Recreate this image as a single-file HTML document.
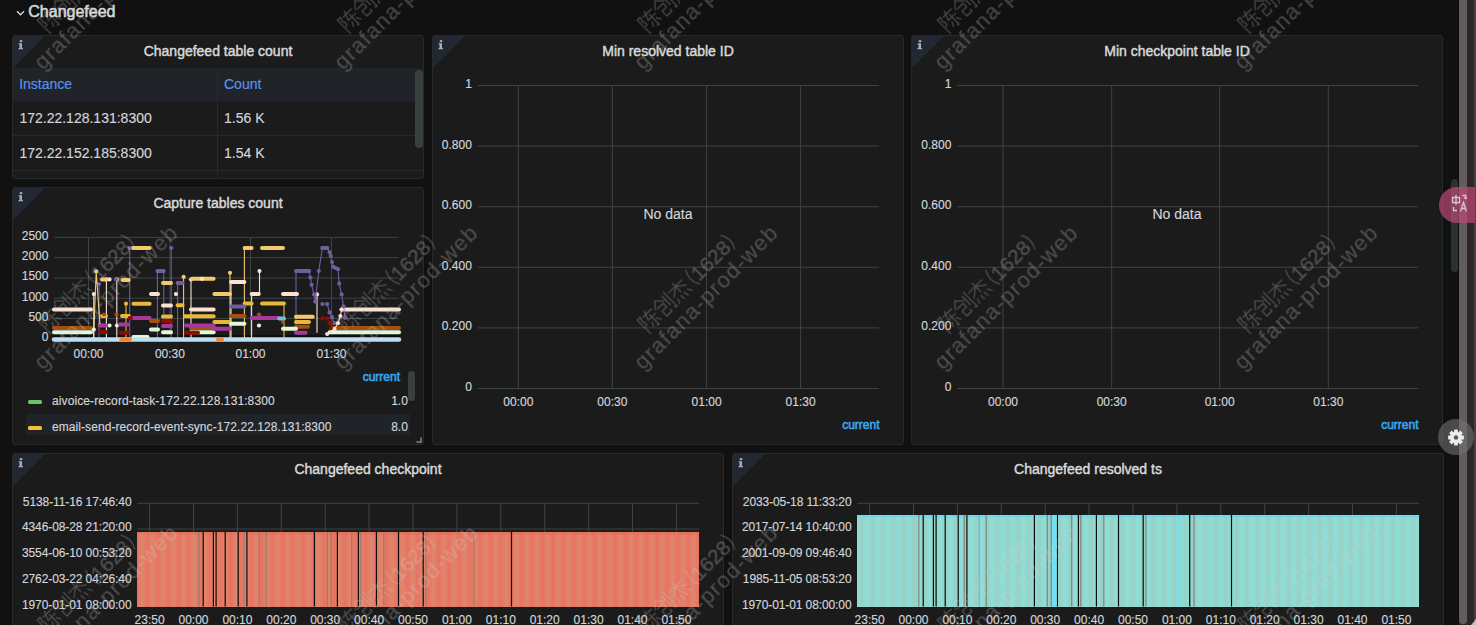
<!DOCTYPE html><html><head><meta charset="utf-8"><style>
*{box-sizing:border-box;margin:0;padding:0}
html,body{width:1476px;height:625px;overflow:hidden;background:#111111;font-family:"Liberation Sans",sans-serif;position:relative}
.p{position:absolute;background:#1b1b1b;border:1px solid #252b2a;border-radius:3px;overflow:hidden}
.corner{position:absolute;left:0;top:0;width:0;height:0;border-left:32px solid #222831;border-bottom:32px solid transparent}
.a{position:absolute;white-space:nowrap}
.m{-webkit-text-stroke:0.45px currentColor}
.n{-webkit-text-stroke:0.15px currentColor}
.b{-webkit-text-stroke:0.55px currentColor}
</style></head><body><svg class="a" style="left:15.5px;top:10px" width="9" height="6" viewBox="0 0 9 6"><path d="M1 1.2L4.5 4.7L8 1.2" stroke="#d8d9da" stroke-width="1.4" fill="none"/></svg><div class="a b" style="top:4.26px;font-size:16px;line-height:16px;color:#d8d9da;left:28.30px;">Changefeed</div><div class="p" style="left:12px;top:35px;width:412px;height:144px"><div class="corner"></div></div><svg class="a" style="left:18px;top:40px" width="6" height="10" viewBox="0 0 6 10"><ellipse cx="3" cy="1.15" rx="1.5" ry="1.05" fill="#a9acb2"/><path d="M0.7 3.2H4V8.1H5V9.2H0.5V8.1H1.5V4.4H0.7z" fill="#a9acb2"/></svg><div class="a m" style="top:43.75px;font-size:14px;line-height:14px;color:#d8d9da;left:-82.00px;width:600px;text-align:center;">Changefeed table count</div><div class="p" style="left:12px;top:187px;width:412px;height:258px"><div class="corner"></div></div><svg class="a" style="left:18px;top:192px" width="6" height="10" viewBox="0 0 6 10"><ellipse cx="3" cy="1.15" rx="1.5" ry="1.05" fill="#a9acb2"/><path d="M0.7 3.2H4V8.1H5V9.2H0.5V8.1H1.5V4.4H0.7z" fill="#a9acb2"/></svg><div class="a m" style="top:195.75px;font-size:14px;line-height:14px;color:#d8d9da;left:-82.00px;width:600px;text-align:center;">Capture tables count</div><div class="p" style="left:432px;top:35px;width:472px;height:410px"><div class="corner"></div></div><svg class="a" style="left:438px;top:40px" width="6" height="10" viewBox="0 0 6 10"><ellipse cx="3" cy="1.15" rx="1.5" ry="1.05" fill="#a9acb2"/><path d="M0.7 3.2H4V8.1H5V9.2H0.5V8.1H1.5V4.4H0.7z" fill="#a9acb2"/></svg><div class="a m" style="top:43.75px;font-size:14px;line-height:14px;color:#d8d9da;left:368.00px;width:600px;text-align:center;">Min resolved table ID</div><div class="p" style="left:911px;top:35px;width:532px;height:410px"><div class="corner"></div></div><svg class="a" style="left:917px;top:40px" width="6" height="10" viewBox="0 0 6 10"><ellipse cx="3" cy="1.15" rx="1.5" ry="1.05" fill="#a9acb2"/><path d="M0.7 3.2H4V8.1H5V9.2H0.5V8.1H1.5V4.4H0.7z" fill="#a9acb2"/></svg><div class="a m" style="top:43.75px;font-size:14px;line-height:14px;color:#d8d9da;left:877.00px;width:600px;text-align:center;">Min checkpoint table ID</div><div class="p" style="left:12px;top:453px;width:712px;height:300px"><div class="corner"></div></div><svg class="a" style="left:18px;top:458px" width="6" height="10" viewBox="0 0 6 10"><ellipse cx="3" cy="1.15" rx="1.5" ry="1.05" fill="#a9acb2"/><path d="M0.7 3.2H4V8.1H5V9.2H0.5V8.1H1.5V4.4H0.7z" fill="#a9acb2"/></svg><div class="a m" style="top:461.75px;font-size:14px;line-height:14px;color:#d8d9da;left:68.00px;width:600px;text-align:center;">Changefeed checkpoint</div><div class="p" style="left:732px;top:453px;width:712px;height:300px"><div class="corner"></div></div><svg class="a" style="left:738px;top:458px" width="6" height="10" viewBox="0 0 6 10"><ellipse cx="3" cy="1.15" rx="1.5" ry="1.05" fill="#a9acb2"/><path d="M0.7 3.2H4V8.1H5V9.2H0.5V8.1H1.5V4.4H0.7z" fill="#a9acb2"/></svg><div class="a m" style="top:461.75px;font-size:14px;line-height:14px;color:#d8d9da;left:788.00px;width:600px;text-align:center;">Changefeed resolved ts</div><div class="a" style="left:13px;top:68px;width:410px;height:33px;background:#202328;"></div><div class="a" style="left:217px;top:68px;width:1px;height:110px;background:#262a2b;"></div><div class="a" style="left:13px;top:135px;width:410px;height:1px;background:#262a2b;"></div><div class="a" style="left:13px;top:170px;width:410px;height:1px;background:#262a2b;"></div><div class="a n" style="top:77.35px;font-size:14px;line-height:14px;color:#5a93f0;left:19.20px;">Instance</div><div class="a n" style="top:77.35px;font-size:14px;line-height:14px;color:#5a93f0;left:224.00px;">Count</div><div class="a n" style="top:111.15px;font-size:14px;line-height:14px;color:#d2d5da;left:19.40px;">172.22.128.131:8300</div><div class="a n" style="top:111.15px;font-size:14px;line-height:14px;color:#d2d5da;left:224.00px;">1.56 K</div><div class="a n" style="top:146.15px;font-size:14px;line-height:14px;color:#d2d5da;left:19.40px;">172.22.152.185:8300</div><div class="a n" style="top:146.15px;font-size:14px;line-height:14px;color:#d2d5da;left:224.00px;">1.54 K</div><div class="a" style="left:415px;top:70px;width:8px;height:78px;background:#3a4040;border-radius:4px"></div><svg class="a" style="left:0;top:0" width="1476" height="625"><line x1="54" x2="398.7" y1="237.4" y2="237.4" stroke="#3c4544"/><line x1="54" x2="398.7" y1="257.7" y2="257.7" stroke="#3c4544"/><line x1="54" x2="398.7" y1="278.0" y2="278.0" stroke="#3c4544"/><line x1="54" x2="398.7" y1="298.2" y2="298.2" stroke="#3c4544"/><line x1="54" x2="398.7" y1="318.5" y2="318.5" stroke="#3c4544"/><line x1="54" x2="398.7" y1="338.8" y2="338.8" stroke="#3c4544"/><line x1="88.5" x2="88.5" y1="237.4" y2="338.8" stroke="#3c4544"/><line x1="169.9" x2="169.9" y1="237.4" y2="338.8" stroke="#3c4544"/><line x1="250.5" x2="250.5" y1="237.4" y2="338.8" stroke="#3c4544"/><line x1="331.5" x2="331.5" y1="237.4" y2="338.8" stroke="#3c4544"/></svg><div class="a n" style="top:229.84px;font-size:12px;line-height:12px;color:#d2d5da;right:1427.60px;text-align:right;">2500</div><div class="a n" style="top:250.12px;font-size:12px;line-height:12px;color:#d2d5da;right:1427.60px;text-align:right;">2000</div><div class="a n" style="top:270.40px;font-size:12px;line-height:12px;color:#d2d5da;right:1427.60px;text-align:right;">1500</div><div class="a n" style="top:290.68px;font-size:12px;line-height:12px;color:#d2d5da;right:1427.60px;text-align:right;">1000</div><div class="a n" style="top:310.96px;font-size:12px;line-height:12px;color:#d2d5da;right:1427.60px;text-align:right;">500</div><div class="a n" style="top:331.24px;font-size:12px;line-height:12px;color:#d2d5da;right:1427.60px;text-align:right;">0</div><div class="a n" style="top:347.84px;font-size:12px;line-height:12px;color:#d2d5da;left:-211.50px;width:600px;text-align:center;">00:00</div><div class="a n" style="top:347.84px;font-size:12px;line-height:12px;color:#d2d5da;left:-130.10px;width:600px;text-align:center;">00:30</div><div class="a n" style="top:347.84px;font-size:12px;line-height:12px;color:#d2d5da;left:-49.50px;width:600px;text-align:center;">01:00</div><div class="a n" style="top:347.84px;font-size:12px;line-height:12px;color:#d2d5da;left:31.50px;width:600px;text-align:center;">01:30</div><svg class="a" style="left:0;top:0" width="1476" height="625"><defs><clipPath id="cp2"><rect x="50" y="228" width="352" height="116"/></clipPath></defs><g clip-path="url(#cp2)"><line x1="54" x2="399" y1="336.3" y2="336.3" stroke="#0d0d0d" stroke-width="2" stroke-linecap="round"/><line x1="54" x2="91" y1="332.3" y2="332.3" stroke="#e0f9d7" stroke-width="4" stroke-linecap="round"/><line x1="329.6" x2="399" y1="332.3" y2="332.3" stroke="#e0f9d7" stroke-width="4" stroke-linecap="round"/><line x1="54" x2="91" y1="328" y2="328" stroke="#a84e0e" stroke-width="4" stroke-linecap="round"/><line x1="332" x2="399" y1="328" y2="328" stroke="#a84e0e" stroke-width="4" stroke-linecap="round"/><line x1="54" x2="91" y1="309.5" y2="309.5" stroke="#f9e2d2" stroke-width="4" stroke-linecap="round"/><line x1="341.6" x2="399" y1="309.5" y2="309.5" stroke="#f9e2d2" stroke-width="4" stroke-linecap="round"/><line x1="191" x2="213.6" y1="309.5" y2="309.5" stroke="#f9e2d2" stroke-width="4" stroke-linecap="round"/><line x1="129.7" x2="129.7" y1="339" y2="248" stroke="#705da0" stroke-width="1.1"/><circle cx="129.7" cy="248" r="2.1" fill="#705da0"/><line x1="171.2" x2="171.2" y1="339" y2="248" stroke="#705da0" stroke-width="1.1"/><circle cx="171.2" cy="248" r="2.1" fill="#705da0"/><line x1="99" x2="99" y1="339" y2="284" stroke="#705da0" stroke-width="1.1"/><circle cx="99" cy="284" r="2.1" fill="#705da0"/><line x1="157.4" x2="157.4" y1="339" y2="270.9" stroke="#705da0" stroke-width="1.1"/><line x1="163.8" x2="163.8" y1="270.9" y2="316" stroke="#705da0" stroke-width="1.1"/><polyline points="93.5,339 96.2,271.4 100,325" fill="none" stroke="#f2c96d" stroke-width="1.1"/><circle cx="93.5" cy="339" r="2.1" fill="#f2c96d"/><circle cx="96.2" cy="271.4" r="2.1" fill="#f2c96d"/><circle cx="100" cy="325" r="2.1" fill="#f2c96d"/><line x1="93.8" x2="93.8" y1="339" y2="294.1" stroke="#f9e2d2" stroke-width="1.1"/><circle cx="93.8" cy="294.1" r="2.1" fill="#f9e2d2"/><line x1="106.4" x2="106.4" y1="339" y2="279.4" stroke="#f9e2d2" stroke-width="1.1"/><circle cx="106.4" cy="279.4" r="2.1" fill="#f9e2d2"/><line x1="116.8" x2="116.8" y1="339" y2="279.4" stroke="#f9e2d2" stroke-width="1.1"/><circle cx="116.8" cy="279.4" r="2.1" fill="#f9e2d2"/><line x1="126" x2="126" y1="339" y2="303.7" stroke="#eab839" stroke-width="1.1"/><circle cx="126" cy="303.7" r="2.1" fill="#eab839"/><line x1="230" x2="230" y1="339" y2="272.8" stroke="#f2c96d" stroke-width="1.1"/><circle cx="230" cy="272.8" r="2.1" fill="#f2c96d"/><line x1="183.6" x2="183.6" y1="339" y2="276.9" stroke="#f2c96d" stroke-width="1.1"/><circle cx="183.6" cy="276.9" r="2.1" fill="#f2c96d"/><line x1="191" x2="191" y1="339" y2="279.5" stroke="#f9e2d2" stroke-width="1.1"/><circle cx="191" cy="279.5" r="2.1" fill="#f9e2d2"/><line x1="231" x2="231" y1="339" y2="281.9" stroke="#f9e2d2" stroke-width="1.1"/><line x1="244.4" x2="244.4" y1="339" y2="248" stroke="#f2c96d" stroke-width="1.1"/><line x1="251.6" x2="251.6" y1="339" y2="294" stroke="#f9e2d2" stroke-width="1.1"/><line x1="259.5" x2="259.5" y1="294" y2="271.1" stroke="#f9e2d2" stroke-width="1.1"/><circle cx="259.5" cy="271.1" r="2.1" fill="#f9e2d2"/><line x1="284" x2="284" y1="303.5" y2="339" stroke="#eab839" stroke-width="1.1"/><line x1="296" x2="296" y1="328.7" y2="271.1" stroke="#705da0" stroke-width="1.1"/><line x1="317" x2="317" y1="332.8" y2="294.4" stroke="#f9e2d2" stroke-width="1.1"/><circle cx="317" cy="294.4" r="2.1" fill="#f9e2d2"/><line x1="177.6" x2="177.6" y1="339" y2="282.9" stroke="#705da0" stroke-width="1.1"/><line x1="133" x2="149.6" y1="248" y2="248" stroke="#f2c96d" stroke-width="4" stroke-linecap="round"/><line x1="244.6" x2="251.6" y1="248" y2="248" stroke="#f2c96d" stroke-width="4" stroke-linecap="round"/><line x1="262" x2="283" y1="248" y2="248" stroke="#f2c96d" stroke-width="4" stroke-linecap="round"/><line x1="102" x2="106" y1="279.4" y2="279.4" stroke="#f2c96d" stroke-width="4" stroke-linecap="round"/><line x1="122.4" x2="128.8" y1="280" y2="280" stroke="#f2c96d" stroke-width="4" stroke-linecap="round"/><line x1="163" x2="171" y1="283" y2="283" stroke="#f2c96d" stroke-width="4" stroke-linecap="round"/><line x1="192" x2="213.6" y1="278.8" y2="278.8" stroke="#f2c96d" stroke-width="4" stroke-linecap="round"/><line x1="214.4" x2="230" y1="294" y2="294" stroke="#f2c96d" stroke-width="4" stroke-linecap="round"/><line x1="296" x2="312.8" y1="316.7" y2="316.7" stroke="#f2c96d" stroke-width="4" stroke-linecap="round"/><circle cx="109.5" cy="279.4" r="2.1" fill="#f9e2d2"/><circle cx="116" cy="279.4" r="2.1" fill="#705da0"/><circle cx="202" cy="278.8" r="2.1" fill="#f9e2d2"/><circle cx="175.9" cy="294.1" r="2.1" fill="#f9e2d2"/><line x1="133.4" x2="149.6" y1="303.7" y2="303.7" stroke="#eab839" stroke-width="4" stroke-linecap="round"/><line x1="244.6" x2="251.6" y1="303.5" y2="303.5" stroke="#eab839" stroke-width="4" stroke-linecap="round"/><line x1="262" x2="284" y1="303.5" y2="303.5" stroke="#eab839" stroke-width="4" stroke-linecap="round"/><line x1="163" x2="171" y1="316.6" y2="316.6" stroke="#eab839" stroke-width="4" stroke-linecap="round"/><line x1="102" x2="106" y1="316" y2="316" stroke="#eab839" stroke-width="4" stroke-linecap="round"/><line x1="122" x2="128.8" y1="316" y2="316" stroke="#eab839" stroke-width="4" stroke-linecap="round"/><line x1="184.8" x2="213.6" y1="316.3" y2="316.3" stroke="#eab839" stroke-width="4" stroke-linecap="round"/><line x1="214.4" x2="230" y1="322" y2="322" stroke="#eab839" stroke-width="4" stroke-linecap="round"/><line x1="296" x2="309" y1="322" y2="322" stroke="#eab839" stroke-width="4" stroke-linecap="round"/><line x1="177.6" x2="182.4" y1="305.2" y2="305.2" stroke="#eab839" stroke-width="4" stroke-linecap="round"/><line x1="157.4" x2="163.8" y1="270.9" y2="270.9" stroke="#705da0" stroke-width="4" stroke-linecap="round"/><line x1="177.6" x2="182.4" y1="282.9" y2="282.9" stroke="#705da0" stroke-width="4" stroke-linecap="round"/><line x1="231" x2="244.4" y1="306.4" y2="306.4" stroke="#705da0" stroke-width="4" stroke-linecap="round"/><line x1="296" x2="309" y1="271.1" y2="271.1" stroke="#705da0" stroke-width="4" stroke-linecap="round"/><polyline points="309,271.1 310.4,277.6 311.6,284.8 314,294.4 315.2,301.6 318.8,271.1 322.4,248 327.2,248 329.6,252.4 330.8,256 332,262 333.2,266.8 335.6,268 338,269.2 339.2,283.6 341.6,294.4 343.5,306.4 345,318" fill="none" stroke="#705da0" stroke-width="1.1"/><circle cx="309" cy="271.1" r="2.1" fill="#705da0"/><circle cx="310.4" cy="277.6" r="2.1" fill="#705da0"/><circle cx="311.6" cy="284.8" r="2.1" fill="#705da0"/><circle cx="314" cy="294.4" r="2.1" fill="#705da0"/><circle cx="315.2" cy="301.6" r="2.1" fill="#705da0"/><circle cx="318.8" cy="271.1" r="2.1" fill="#705da0"/><circle cx="322.4" cy="248" r="2.1" fill="#705da0"/><circle cx="327.2" cy="248" r="2.1" fill="#705da0"/><circle cx="329.6" cy="252.4" r="2.1" fill="#705da0"/><circle cx="330.8" cy="256" r="2.1" fill="#705da0"/><circle cx="332" cy="262" r="2.1" fill="#705da0"/><circle cx="333.2" cy="266.8" r="2.1" fill="#705da0"/><circle cx="335.6" cy="268" r="2.1" fill="#705da0"/><circle cx="338" cy="269.2" r="2.1" fill="#705da0"/><circle cx="339.2" cy="283.6" r="2.1" fill="#705da0"/><circle cx="341.6" cy="294.4" r="2.1" fill="#705da0"/><circle cx="343.5" cy="306.4" r="2.1" fill="#705da0"/><circle cx="345" cy="318" r="2.1" fill="#705da0"/><line x1="322.4" x2="327.2" y1="248" y2="248" stroke="#705da0" stroke-width="4" stroke-linecap="round"/><polyline points="322.4,304 327.2,304 329.6,312.4 332,317.2 334.4,323.2" fill="none" stroke="#705da0" stroke-width="1.1"/><circle cx="322.4" cy="304" r="2.1" fill="#705da0"/><circle cx="327.2" cy="304" r="2.1" fill="#705da0"/><circle cx="329.6" cy="312.4" r="2.1" fill="#705da0"/><circle cx="332" cy="317.2" r="2.1" fill="#705da0"/><circle cx="334.4" cy="323.2" r="2.1" fill="#705da0"/><line x1="151" x2="158" y1="294" y2="294" stroke="#f9e2d2" stroke-width="4" stroke-linecap="round"/><line x1="163" x2="171" y1="305.5" y2="305.5" stroke="#f9e2d2" stroke-width="4" stroke-linecap="round"/><line x1="231" x2="244.4" y1="281.9" y2="281.9" stroke="#f9e2d2" stroke-width="4" stroke-linecap="round"/><line x1="251.6" x2="258.8" y1="294" y2="294" stroke="#f9e2d2" stroke-width="4" stroke-linecap="round"/><line x1="283" x2="297" y1="294" y2="294" stroke="#f9e2d2" stroke-width="4" stroke-linecap="round"/><polyline points="327.2,334 334.4,329.2 338,323.2 340.4,316 341.6,309.5" fill="none" stroke="#f9e2d2" stroke-width="1.1"/><circle cx="327.2" cy="334" r="2.1" fill="#f9e2d2"/><circle cx="334.4" cy="329.2" r="2.1" fill="#f9e2d2"/><circle cx="338" cy="323.2" r="2.1" fill="#f9e2d2"/><circle cx="340.4" cy="316" r="2.1" fill="#f9e2d2"/><circle cx="341.6" cy="309.5" r="2.1" fill="#f9e2d2"/><line x1="151" x2="158" y1="321" y2="321" stroke="#a84e0e" stroke-width="4" stroke-linecap="round"/><line x1="191" x2="213.6" y1="328" y2="328" stroke="#a84e0e" stroke-width="4" stroke-linecap="round"/><line x1="231" x2="244.4" y1="316" y2="316" stroke="#a84e0e" stroke-width="4" stroke-linecap="round"/><line x1="296" x2="308" y1="326.8" y2="326.8" stroke="#a84e0e" stroke-width="4" stroke-linecap="round"/><circle cx="104" cy="314.5" r="2.1" fill="#a84e0e"/><circle cx="116.5" cy="314.5" r="2.1" fill="#a84e0e"/><circle cx="259" cy="314.5" r="2.1" fill="#a84e0e"/><circle cx="283" cy="322" r="2.1" fill="#a84e0e"/><line x1="151" x2="158" y1="329.4" y2="329.4" stroke="#e0f9d7" stroke-width="4" stroke-linecap="round"/><line x1="283" x2="296" y1="328.7" y2="328.7" stroke="#e0f9d7" stroke-width="4" stroke-linecap="round"/><line x1="231" x2="244.4" y1="323.7" y2="323.7" stroke="#e0f9d7" stroke-width="4" stroke-linecap="round"/><line x1="191" x2="213.6" y1="332.3" y2="332.3" stroke="#e0f9d7" stroke-width="4" stroke-linecap="round"/><line x1="163" x2="171" y1="332.3" y2="332.3" stroke="#e0f9d7" stroke-width="4" stroke-linecap="round"/><circle cx="93.8" cy="329.5" r="2.1" fill="#e0f9d7"/><circle cx="109.5" cy="325.5" r="2.1" fill="#e0f9d7"/><circle cx="117" cy="325.5" r="2.1" fill="#e0f9d7"/><circle cx="259" cy="325.5" r="2.1" fill="#e0f9d7"/><line x1="133" x2="148" y1="336.4" y2="336.4" stroke="#e0f9d7" stroke-width="3" stroke-linecap="round"/><line x1="133" x2="149.6" y1="318" y2="318" stroke="#a8399c" stroke-width="4" stroke-linecap="round"/><line x1="251.6" x2="279.2" y1="318" y2="318" stroke="#a8399c" stroke-width="4" stroke-linecap="round"/><line x1="279.2" x2="284" y1="318.4" y2="318.4" stroke="#65c5db" stroke-width="4" stroke-linecap="round"/><line x1="100" x2="106" y1="325.6" y2="325.6" stroke="#a8399c" stroke-width="4" stroke-linecap="round"/><line x1="120" x2="128" y1="324.5" y2="324.5" stroke="#a8399c" stroke-width="4" stroke-linecap="round"/><line x1="186" x2="213.6" y1="325.6" y2="325.6" stroke="#a8399c" stroke-width="4" stroke-linecap="round"/><line x1="214" x2="230" y1="328.7" y2="328.7" stroke="#a8399c" stroke-width="4" stroke-linecap="round"/><line x1="296" x2="305.6" y1="332.8" y2="332.8" stroke="#a8399c" stroke-width="4" stroke-linecap="round"/><line x1="163" x2="171" y1="326" y2="326" stroke="#a8399c" stroke-width="4" stroke-linecap="round"/><line x1="100" x2="106" y1="332" y2="332" stroke="#890f02" stroke-width="4" stroke-linecap="round"/><line x1="121" x2="128" y1="332.8" y2="332.8" stroke="#890f02" stroke-width="4" stroke-linecap="round"/><line x1="186" x2="198" y1="332.8" y2="332.8" stroke="#890f02" stroke-width="4" stroke-linecap="round"/><line x1="163" x2="171" y1="321" y2="321" stroke="#890f02" stroke-width="4" stroke-linecap="round"/><line x1="129.7" x2="131" y1="318" y2="318" stroke="#890f02" stroke-width="4" stroke-linecap="round"/><polyline points="322.4,318.4 327.2,318.4 329.6,323.2 330.8,328" fill="none" stroke="#890f02" stroke-width="1.1"/><circle cx="322.4" cy="318.4" r="2.1" fill="#890f02"/><circle cx="327.2" cy="318.4" r="2.1" fill="#890f02"/><circle cx="329.6" cy="323.2" r="2.1" fill="#890f02"/><circle cx="330.8" cy="328" r="2.1" fill="#890f02"/><line x1="54" x2="399" y1="339.5" y2="339.5" stroke="#badff4" stroke-width="4.5" stroke-linecap="round"/><line x1="121.4" x2="129.7" y1="339.5" y2="339.5" stroke="#ef843c" stroke-width="4" stroke-linecap="round"/><line x1="218" x2="222" y1="339.5" y2="339.5" stroke="#ef843c" stroke-width="4" stroke-linecap="round"/></g></svg><div class="a b" style="top:370.84px;font-size:12px;line-height:12px;color:#36a8f0;right:1076.00px;text-align:right;">current</div><div class="a" style="left:28px;top:400px;width:14px;height:4px;background:#73bf69;border-radius:1.5px"></div><div class="a n" style="top:394.54px;font-size:12px;line-height:12px;color:#d2d5da;letter-spacing:0.1px;left:52.00px;">aivoice-record-task-172.22.128.131:8300</div><div class="a n" style="top:394.54px;font-size:12px;line-height:12px;color:#d2d5da;right:1068.20px;text-align:right;">1.0</div><div class="a" style="left:26px;top:414px;width:384px;height:21px;background:#202328;"></div><div class="a" style="left:28px;top:426px;width:14px;height:4px;background:#f2c13a;border-radius:1.5px"></div><div class="a n" style="top:420.84px;font-size:12px;line-height:12px;color:#d2d5da;letter-spacing:0.07px;left:52.00px;">email-send-record-event-sync-172.22.128.131:8300</div><div class="a n" style="top:420.84px;font-size:12px;line-height:12px;color:#d2d5da;right:1068.20px;text-align:right;">8.0</div><div class="a" style="left:408px;top:371px;width:7px;height:30px;background:#3a4040;border-radius:4px"></div><svg class="a" style="left:415px;top:436px" width="8" height="8"><path d="M5 1.5H7V7H1.5V5H5z" fill="#6a6d6e"/></svg><svg class="a" style="left:0;top:0" width="1476" height="625"><line x1="477.8" x2="879" y1="85.5" y2="85.5" stroke="#3c4544"/><line x1="477.8" x2="879" y1="146.1" y2="146.1" stroke="#3c4544"/><line x1="477.8" x2="879" y1="206.7" y2="206.7" stroke="#3c4544"/><line x1="477.8" x2="879" y1="267.3" y2="267.3" stroke="#3c4544"/><line x1="477.8" x2="879" y1="327.9" y2="327.9" stroke="#3c4544"/><line x1="477.8" x2="879" y1="388.5" y2="388.5" stroke="#3c4544"/><line x1="518.3" x2="518.3" y1="85.5" y2="388.5" stroke="#3c4544"/><line x1="612.3" x2="612.3" y1="85.5" y2="388.5" stroke="#3c4544"/><line x1="706.6" x2="706.6" y1="85.5" y2="388.5" stroke="#3c4544"/><line x1="800.6" x2="800.6" y1="85.5" y2="388.5" stroke="#3c4544"/></svg><div class="a n" style="top:77.94px;font-size:12px;line-height:12px;color:#d2d5da;right:1004.20px;text-align:right;">1</div><div class="a n" style="top:138.54px;font-size:12px;line-height:12px;color:#d2d5da;right:1004.20px;text-align:right;">0.800</div><div class="a n" style="top:199.14px;font-size:12px;line-height:12px;color:#d2d5da;right:1004.20px;text-align:right;">0.600</div><div class="a n" style="top:259.74px;font-size:12px;line-height:12px;color:#d2d5da;right:1004.20px;text-align:right;">0.400</div><div class="a n" style="top:320.34px;font-size:12px;line-height:12px;color:#d2d5da;right:1004.20px;text-align:right;">0.200</div><div class="a n" style="top:380.94px;font-size:12px;line-height:12px;color:#d2d5da;right:1004.20px;text-align:right;">0</div><div class="a n" style="top:396.24px;font-size:12px;line-height:12px;color:#d2d5da;left:218.30px;width:600px;text-align:center;">00:00</div><div class="a n" style="top:396.24px;font-size:12px;line-height:12px;color:#d2d5da;left:312.30px;width:600px;text-align:center;">00:30</div><div class="a n" style="top:396.24px;font-size:12px;line-height:12px;color:#d2d5da;left:406.60px;width:600px;text-align:center;">01:00</div><div class="a n" style="top:396.24px;font-size:12px;line-height:12px;color:#d2d5da;left:500.60px;width:600px;text-align:center;">01:30</div><div class="a n" style="top:207.15px;font-size:14px;line-height:14px;color:#d2d5da;left:368.00px;width:600px;text-align:center;">No data</div><div class="a b" style="top:418.84px;font-size:12px;line-height:12px;color:#36a8f0;right:596.50px;text-align:right;">current</div><svg class="a" style="left:0;top:0" width="1476" height="625"><line x1="957.3" x2="1418" y1="85.5" y2="85.5" stroke="#3c4544"/><line x1="957.3" x2="1418" y1="146.1" y2="146.1" stroke="#3c4544"/><line x1="957.3" x2="1418" y1="206.7" y2="206.7" stroke="#3c4544"/><line x1="957.3" x2="1418" y1="267.3" y2="267.3" stroke="#3c4544"/><line x1="957.3" x2="1418" y1="327.9" y2="327.9" stroke="#3c4544"/><line x1="957.3" x2="1418" y1="388.5" y2="388.5" stroke="#3c4544"/><line x1="1003.0" x2="1003.0" y1="85.5" y2="388.5" stroke="#3c4544"/><line x1="1111.7" x2="1111.7" y1="85.5" y2="388.5" stroke="#3c4544"/><line x1="1219.7" x2="1219.7" y1="85.5" y2="388.5" stroke="#3c4544"/><line x1="1328.3" x2="1328.3" y1="85.5" y2="388.5" stroke="#3c4544"/></svg><div class="a n" style="top:77.94px;font-size:12px;line-height:12px;color:#d2d5da;right:524.70px;text-align:right;">1</div><div class="a n" style="top:138.54px;font-size:12px;line-height:12px;color:#d2d5da;right:524.70px;text-align:right;">0.800</div><div class="a n" style="top:199.14px;font-size:12px;line-height:12px;color:#d2d5da;right:524.70px;text-align:right;">0.600</div><div class="a n" style="top:259.74px;font-size:12px;line-height:12px;color:#d2d5da;right:524.70px;text-align:right;">0.400</div><div class="a n" style="top:320.34px;font-size:12px;line-height:12px;color:#d2d5da;right:524.70px;text-align:right;">0.200</div><div class="a n" style="top:380.94px;font-size:12px;line-height:12px;color:#d2d5da;right:524.70px;text-align:right;">0</div><div class="a n" style="top:396.24px;font-size:12px;line-height:12px;color:#d2d5da;left:703.00px;width:600px;text-align:center;">00:00</div><div class="a n" style="top:396.24px;font-size:12px;line-height:12px;color:#d2d5da;left:811.70px;width:600px;text-align:center;">00:30</div><div class="a n" style="top:396.24px;font-size:12px;line-height:12px;color:#d2d5da;left:919.70px;width:600px;text-align:center;">01:00</div><div class="a n" style="top:396.24px;font-size:12px;line-height:12px;color:#d2d5da;left:1028.30px;width:600px;text-align:center;">01:30</div><div class="a n" style="top:207.15px;font-size:14px;line-height:14px;color:#d2d5da;left:877.00px;width:600px;text-align:center;">No data</div><div class="a b" style="top:418.84px;font-size:12px;line-height:12px;color:#36a8f0;right:57.50px;text-align:right;">current</div><svg class="a" style="left:0;top:0" width="1476" height="625"><line x1="137.3" x2="699.2" y1="503.3" y2="503.3" stroke="#3c4544"/><line x1="137.3" x2="699.2" y1="529.0" y2="529.0" stroke="#3c4544"/><line x1="137.3" x2="699.2" y1="554.8" y2="554.8" stroke="#3c4544"/><line x1="137.3" x2="699.2" y1="580.5" y2="580.5" stroke="#3c4544"/><line x1="137.3" x2="699.2" y1="606.3" y2="606.3" stroke="#3c4544"/><line x1="149.6" x2="149.6" y1="503.3" y2="606.3" stroke="#3c4544"/><line x1="193.5" x2="193.5" y1="503.3" y2="606.3" stroke="#3c4544"/><line x1="237.4" x2="237.4" y1="503.3" y2="606.3" stroke="#3c4544"/><line x1="281.3" x2="281.3" y1="503.3" y2="606.3" stroke="#3c4544"/><line x1="325.2" x2="325.2" y1="503.3" y2="606.3" stroke="#3c4544"/><line x1="369.1" x2="369.1" y1="503.3" y2="606.3" stroke="#3c4544"/><line x1="413.0" x2="413.0" y1="503.3" y2="606.3" stroke="#3c4544"/><line x1="456.9" x2="456.9" y1="503.3" y2="606.3" stroke="#3c4544"/><line x1="500.8" x2="500.8" y1="503.3" y2="606.3" stroke="#3c4544"/><line x1="544.7" x2="544.7" y1="503.3" y2="606.3" stroke="#3c4544"/><line x1="588.6" x2="588.6" y1="503.3" y2="606.3" stroke="#3c4544"/><line x1="632.5" x2="632.5" y1="503.3" y2="606.3" stroke="#3c4544"/><line x1="676.4" x2="676.4" y1="503.3" y2="606.3" stroke="#3c4544"/></svg><div class="a" style="left:137.3px;top:532.0px;width:561.9px;height:74.5px;background:repeating-linear-gradient(90deg,#ea7160 0px,#dc886d 5.2px,#ea7160 10.4px)"></div><svg class="a" style="left:0;top:0" width="1476" height="625"><rect x="137.3" y="532.6" width="561.9" height="1.6" fill="#ee6a58"/><rect x="202.60" y="532" width="1.2" height="74.5" fill="#0b0b0b"/><rect x="212.80" y="532" width="1.2" height="74.5" fill="#0b0b0b"/><rect x="215.50" y="532" width="1.2" height="74.5" fill="#0b0b0b"/><rect x="224.60" y="532" width="1.2" height="74.5" fill="#0b0b0b"/><rect x="237.60" y="532" width="1.2" height="74.5" fill="#0b0b0b"/><rect x="246.30" y="532" width="1.2" height="74.5" fill="#0b0b0b"/><rect x="313.80" y="532" width="1.2" height="74.5" fill="#0b0b0b"/><rect x="336.80" y="532" width="1.2" height="74.5" fill="#0b0b0b"/><rect x="357.80" y="532" width="1.2" height="74.5" fill="#0b0b0b"/><rect x="375.80" y="532" width="1.2" height="74.5" fill="#0b0b0b"/><rect x="397.90" y="532" width="1.2" height="74.5" fill="#0b0b0b"/><rect x="422.60" y="532" width="1.2" height="74.5" fill="#0b0b0b"/><rect x="510.90" y="532" width="1.2" height="74.5" fill="#0b0b0b"/><rect x="198.20" y="532" width="1.2" height="74.5" fill="#9a7a6c"/><rect x="243.60" y="532" width="1.2" height="74.5" fill="#9a7a6c"/><rect x="265.60" y="532" width="1.2" height="74.5" fill="#9a7a6c"/><rect x="326.70" y="532" width="1.2" height="74.5" fill="#9a7a6c"/><rect x="330.60" y="532" width="1.2" height="74.5" fill="#9a7a6c"/><rect x="351.10" y="532" width="1.2" height="74.5" fill="#9a7a6c"/><rect x="360.20" y="532" width="1.2" height="74.5" fill="#9a7a6c"/><rect x="383.20" y="532" width="1.2" height="74.5" fill="#9a7a6c"/><rect x="425.30" y="532" width="1.2" height="74.5" fill="#9a7a6c"/><rect x="473.40" y="532" width="1.2" height="74.5" fill="#9a7a6c"/><rect x="258.70" y="532" width="1" height="74.5" fill="#a87088"/></svg><div class="a n" style="top:495.74px;font-size:12px;line-height:12px;color:#d2d5da;letter-spacing:-0.1px;right:1344.50px;text-align:right;">5138-11-16 17:46:40</div><div class="a n" style="top:521.49px;font-size:12px;line-height:12px;color:#d2d5da;letter-spacing:-0.1px;right:1344.50px;text-align:right;">4346-08-28 21:20:00</div><div class="a n" style="top:547.24px;font-size:12px;line-height:12px;color:#d2d5da;letter-spacing:-0.1px;right:1344.50px;text-align:right;">3554-06-10 00:53:20</div><div class="a n" style="top:572.99px;font-size:12px;line-height:12px;color:#d2d5da;letter-spacing:-0.1px;right:1344.50px;text-align:right;">2762-03-22 04:26:40</div><div class="a n" style="top:598.74px;font-size:12px;line-height:12px;color:#d2d5da;letter-spacing:-0.1px;right:1344.50px;text-align:right;">1970-01-01 08:00:00</div><div class="a n" style="top:614.34px;font-size:12px;line-height:12px;color:#d2d5da;left:-150.40px;width:600px;text-align:center;">23:50</div><div class="a n" style="top:614.34px;font-size:12px;line-height:12px;color:#d2d5da;left:-106.50px;width:600px;text-align:center;">00:00</div><div class="a n" style="top:614.34px;font-size:12px;line-height:12px;color:#d2d5da;left:-62.60px;width:600px;text-align:center;">00:10</div><div class="a n" style="top:614.34px;font-size:12px;line-height:12px;color:#d2d5da;left:-18.70px;width:600px;text-align:center;">00:20</div><div class="a n" style="top:614.34px;font-size:12px;line-height:12px;color:#d2d5da;left:25.20px;width:600px;text-align:center;">00:30</div><div class="a n" style="top:614.34px;font-size:12px;line-height:12px;color:#d2d5da;left:69.10px;width:600px;text-align:center;">00:40</div><div class="a n" style="top:614.34px;font-size:12px;line-height:12px;color:#d2d5da;left:113.00px;width:600px;text-align:center;">00:50</div><div class="a n" style="top:614.34px;font-size:12px;line-height:12px;color:#d2d5da;left:156.90px;width:600px;text-align:center;">01:00</div><div class="a n" style="top:614.34px;font-size:12px;line-height:12px;color:#d2d5da;left:200.80px;width:600px;text-align:center;">01:10</div><div class="a n" style="top:614.34px;font-size:12px;line-height:12px;color:#d2d5da;left:244.70px;width:600px;text-align:center;">01:20</div><div class="a n" style="top:614.34px;font-size:12px;line-height:12px;color:#d2d5da;left:288.60px;width:600px;text-align:center;">01:30</div><div class="a n" style="top:614.34px;font-size:12px;line-height:12px;color:#d2d5da;left:332.50px;width:600px;text-align:center;">01:40</div><div class="a n" style="top:614.34px;font-size:12px;line-height:12px;color:#d2d5da;left:376.40px;width:600px;text-align:center;">01:50</div><svg class="a" style="left:0;top:0" width="1476" height="625"><line x1="857.3" x2="1419.2" y1="503.3" y2="503.3" stroke="#3c4544"/><line x1="857.3" x2="1419.2" y1="529.0" y2="529.0" stroke="#3c4544"/><line x1="857.3" x2="1419.2" y1="554.8" y2="554.8" stroke="#3c4544"/><line x1="857.3" x2="1419.2" y1="580.5" y2="580.5" stroke="#3c4544"/><line x1="857.3" x2="1419.2" y1="606.3" y2="606.3" stroke="#3c4544"/><line x1="869.6" x2="869.6" y1="503.3" y2="606.3" stroke="#3c4544"/><line x1="913.5" x2="913.5" y1="503.3" y2="606.3" stroke="#3c4544"/><line x1="957.4" x2="957.4" y1="503.3" y2="606.3" stroke="#3c4544"/><line x1="1001.3" x2="1001.3" y1="503.3" y2="606.3" stroke="#3c4544"/><line x1="1045.2" x2="1045.2" y1="503.3" y2="606.3" stroke="#3c4544"/><line x1="1089.1" x2="1089.1" y1="503.3" y2="606.3" stroke="#3c4544"/><line x1="1133.0" x2="1133.0" y1="503.3" y2="606.3" stroke="#3c4544"/><line x1="1176.9" x2="1176.9" y1="503.3" y2="606.3" stroke="#3c4544"/><line x1="1220.8" x2="1220.8" y1="503.3" y2="606.3" stroke="#3c4544"/><line x1="1264.7" x2="1264.7" y1="503.3" y2="606.3" stroke="#3c4544"/><line x1="1308.6" x2="1308.6" y1="503.3" y2="606.3" stroke="#3c4544"/><line x1="1352.5" x2="1352.5" y1="503.3" y2="606.3" stroke="#3c4544"/><line x1="1396.4" x2="1396.4" y1="503.3" y2="606.3" stroke="#3c4544"/></svg><div class="a" style="left:857.3px;top:515.0px;width:561.9px;height:91.5px;background:repeating-linear-gradient(90deg,#8ddfd9 0px,#98d0c4 5.2px,#8ddfd9 10.4px)"></div><svg class="a" style="left:0;top:0" width="1476" height="625"><rect x="857.3" y="515.6" width="561.9" height="1.6" fill="#6ad8ec"/><rect x="922.60" y="515" width="1.2" height="91.5" fill="#0b0b0b"/><rect x="932.80" y="515" width="1.2" height="91.5" fill="#0b0b0b"/><rect x="935.50" y="515" width="1.2" height="91.5" fill="#0b0b0b"/><rect x="944.60" y="515" width="1.2" height="91.5" fill="#0b0b0b"/><rect x="957.60" y="515" width="1.2" height="91.5" fill="#0b0b0b"/><rect x="966.30" y="515" width="1.2" height="91.5" fill="#0b0b0b"/><rect x="1033.80" y="515" width="1.2" height="91.5" fill="#0b0b0b"/><rect x="1056.80" y="515" width="1.2" height="91.5" fill="#0b0b0b"/><rect x="1077.80" y="515" width="1.2" height="91.5" fill="#0b0b0b"/><rect x="1095.80" y="515" width="1.2" height="91.5" fill="#0b0b0b"/><rect x="1117.90" y="515" width="1.2" height="91.5" fill="#0b0b0b"/><rect x="1142.60" y="515" width="1.2" height="91.5" fill="#0b0b0b"/><rect x="1230.90" y="515" width="1.2" height="91.5" fill="#0b0b0b"/><rect x="918.20" y="515" width="1.2" height="91.5" fill="#85807a"/><rect x="963.60" y="515" width="1.2" height="91.5" fill="#85807a"/><rect x="985.60" y="515" width="1.2" height="91.5" fill="#85807a"/><rect x="1046.70" y="515" width="1.2" height="91.5" fill="#85807a"/><rect x="1050.60" y="515" width="1.2" height="91.5" fill="#85807a"/><rect x="1071.10" y="515" width="1.2" height="91.5" fill="#85807a"/><rect x="1080.20" y="515" width="1.2" height="91.5" fill="#85807a"/><rect x="1103.20" y="515" width="1.2" height="91.5" fill="#85807a"/><rect x="1145.30" y="515" width="1.2" height="91.5" fill="#85807a"/><rect x="1193.40" y="515" width="1.2" height="91.5" fill="#85807a"/><rect x="978.70" y="515" width="1" height="91.5" fill="#6aa8e0"/><rect x="1052" y="515" width="4.70" height="91.5" fill="#72e0f2"/><rect x="1178.3" y="515" width="2.20" height="91.5" fill="#72e0f2"/><rect x="1189.05" y="515" width="1.30" height="91.5" fill="#0b0b0b"/></svg><div class="a n" style="top:495.74px;font-size:12px;line-height:12px;color:#d2d5da;letter-spacing:-0.1px;right:624.50px;text-align:right;">2033-05-18 11:33:20</div><div class="a n" style="top:521.49px;font-size:12px;line-height:12px;color:#d2d5da;letter-spacing:-0.1px;right:624.50px;text-align:right;">2017-07-14 10:40:00</div><div class="a n" style="top:547.24px;font-size:12px;line-height:12px;color:#d2d5da;letter-spacing:-0.1px;right:624.50px;text-align:right;">2001-09-09 09:46:40</div><div class="a n" style="top:572.99px;font-size:12px;line-height:12px;color:#d2d5da;letter-spacing:-0.1px;right:624.50px;text-align:right;">1985-11-05 08:53:20</div><div class="a n" style="top:598.74px;font-size:12px;line-height:12px;color:#d2d5da;letter-spacing:-0.1px;right:624.50px;text-align:right;">1970-01-01 08:00:00</div><div class="a n" style="top:614.34px;font-size:12px;line-height:12px;color:#d2d5da;left:569.60px;width:600px;text-align:center;">23:50</div><div class="a n" style="top:614.34px;font-size:12px;line-height:12px;color:#d2d5da;left:613.50px;width:600px;text-align:center;">00:00</div><div class="a n" style="top:614.34px;font-size:12px;line-height:12px;color:#d2d5da;left:657.40px;width:600px;text-align:center;">00:10</div><div class="a n" style="top:614.34px;font-size:12px;line-height:12px;color:#d2d5da;left:701.30px;width:600px;text-align:center;">00:20</div><div class="a n" style="top:614.34px;font-size:12px;line-height:12px;color:#d2d5da;left:745.20px;width:600px;text-align:center;">00:30</div><div class="a n" style="top:614.34px;font-size:12px;line-height:12px;color:#d2d5da;left:789.10px;width:600px;text-align:center;">00:40</div><div class="a n" style="top:614.34px;font-size:12px;line-height:12px;color:#d2d5da;left:833.00px;width:600px;text-align:center;">00:50</div><div class="a n" style="top:614.34px;font-size:12px;line-height:12px;color:#d2d5da;left:876.90px;width:600px;text-align:center;">01:00</div><div class="a n" style="top:614.34px;font-size:12px;line-height:12px;color:#d2d5da;left:920.80px;width:600px;text-align:center;">01:10</div><div class="a n" style="top:614.34px;font-size:12px;line-height:12px;color:#d2d5da;left:964.70px;width:600px;text-align:center;">01:20</div><div class="a n" style="top:614.34px;font-size:12px;line-height:12px;color:#d2d5da;left:1008.60px;width:600px;text-align:center;">01:30</div><div class="a n" style="top:614.34px;font-size:12px;line-height:12px;color:#d2d5da;left:1052.50px;width:600px;text-align:center;">01:40</div><div class="a n" style="top:614.34px;font-size:12px;line-height:12px;color:#d2d5da;left:1096.40px;width:600px;text-align:center;">01:50</div><div class="a" style="left:1451px;top:179px;width:7px;height:93px;background:#2b3232;border-radius:4px"></div><div class="a" style="left:1474px;top:0px;width:2px;height:625px;background:#454242;"></div><div class="a" style="left:1459px;top:0px;width:15px;height:625px;background:#2d2727;border-radius:0 0 5px 0"></div><div class="a" style="left:1458px;top:0px;width:1px;height:625px;background:#0c0c0c;"></div><div class="a" style="left:1459px;top:-10px;width:8px;height:634px;background:#635c5c;border-radius:4px"></div><div class="a" style="left:1438.5px;top:187px;width:36.5px;height:36px;background:rgba(186,72,118,0.72);border-radius:18px 0 0 18px"></div><svg class="a" style="left:1448px;top:192px" width="24" height="24" viewBox="0 0 24 24" fill="none" stroke="#d9c6cf" stroke-width="1.3"><path d="M4.5 5.5h7v5h-7z M8 3v10"/><path d="M14.5 3.5h3.2v3"/><path d="M16.3 5.4l1.4 1.3 1.4-1.3"/><path d="M5.5 15v3.5h3.5"/><path d="M12.5 19.5L15.5 10.5L18.5 19.5 M13.5 16.5h4"/></svg><svg class="a" style="left:1438px;top:419px" width="36" height="36" viewBox="0 0 36 36"><circle cx="18" cy="18" r="18" fill="rgba(112,112,112,0.6)"/><g transform="translate(18,18.5)" fill="#ececec"><rect x="-1.9" y="-7.9" width="3.8" height="4" rx="0.7" transform="rotate(0)"/><rect x="-1.9" y="-7.9" width="3.8" height="4" rx="0.7" transform="rotate(45)"/><rect x="-1.9" y="-7.9" width="3.8" height="4" rx="0.7" transform="rotate(90)"/><rect x="-1.9" y="-7.9" width="3.8" height="4" rx="0.7" transform="rotate(135)"/><rect x="-1.9" y="-7.9" width="3.8" height="4" rx="0.7" transform="rotate(180)"/><rect x="-1.9" y="-7.9" width="3.8" height="4" rx="0.7" transform="rotate(225)"/><rect x="-1.9" y="-7.9" width="3.8" height="4" rx="0.7" transform="rotate(270)"/><rect x="-1.9" y="-7.9" width="3.8" height="4" rx="0.7" transform="rotate(315)"/><circle r="5.9"/></g><circle cx="18" cy="18.5" r="2.2" fill="#5a5a5a"/></svg><svg class="a" style="left:1471px;top:619px" width="5" height="6"><path d="M5 0V6H0z" fill="#b8b8d8"/></svg><svg class="a" style="left:0;top:0;font-family:'Liberation Sans'" width="1476" height="625"><g opacity="0.28"><g transform="translate(99.39999999999998,-9.699999999999989) rotate(-45)"><g transform="translate(-66.80,-6.00)" fill="none" stroke="#d2d2d2" stroke-linecap="round" stroke-linejoin="round"><path transform="translate(0.00,0) scale(0.21)" d="M8,-80H28L20,-56Q32,-44 24,-32L18,-30M8,-80V10M38,-70H94M62,-86L44,-42H92M68,-58V8L60,4M52,-24L42,-4M80,-24L92,-4" stroke-width="6.43"/><path transform="translate(21.00,0) scale(0.21)" d="M32,-86L4,-54M32,-86L62,-56M14,-50H52V-26H22V6H56V-6M72,-76V-22M90,-86V8L80,2" stroke-width="6.43"/><path transform="translate(42.00,0) scale(0.21)" d="M6,-66H94M50,-86V-30M50,-64L8,-32M50,-64L92,-34M16,-16L8,6M38,-16L40,6M60,-16L64,6M82,-16L94,6" stroke-width="6.43"/><path transform="translate(63.00,0) scale(0.21)" d="M40,-84Q12,-38 40,8" stroke-width="6.43"/><text x="72.56" y="0" font-size="21" fill="#d2d2d2" stroke="#d2d2d2" stroke-width="0.35">1628</text><path transform="translate(119.26,0) scale(0.21)" d="M8,-84Q36,-38 8,8" stroke-width="6.43"/></g><text x="-96.83" y="16.50" font-size="22" letter-spacing="1.25" fill="#d2d2d2" stroke="#d2d2d2" stroke-width="0.1">grafana-prod-web</text></g><g transform="translate(99.39999999999998,290.3) rotate(-45)"><g transform="translate(-66.80,-6.00)" fill="none" stroke="#d2d2d2" stroke-linecap="round" stroke-linejoin="round"><path transform="translate(0.00,0) scale(0.21)" d="M8,-80H28L20,-56Q32,-44 24,-32L18,-30M8,-80V10M38,-70H94M62,-86L44,-42H92M68,-58V8L60,4M52,-24L42,-4M80,-24L92,-4" stroke-width="6.43"/><path transform="translate(21.00,0) scale(0.21)" d="M32,-86L4,-54M32,-86L62,-56M14,-50H52V-26H22V6H56V-6M72,-76V-22M90,-86V8L80,2" stroke-width="6.43"/><path transform="translate(42.00,0) scale(0.21)" d="M6,-66H94M50,-86V-30M50,-64L8,-32M50,-64L92,-34M16,-16L8,6M38,-16L40,6M60,-16L64,6M82,-16L94,6" stroke-width="6.43"/><path transform="translate(63.00,0) scale(0.21)" d="M40,-84Q12,-38 40,8" stroke-width="6.43"/><text x="72.56" y="0" font-size="21" fill="#d2d2d2" stroke="#d2d2d2" stroke-width="0.35">1628</text><path transform="translate(119.26,0) scale(0.21)" d="M8,-84Q36,-38 8,8" stroke-width="6.43"/></g><text x="-96.83" y="16.50" font-size="22" letter-spacing="1.25" fill="#d2d2d2" stroke="#d2d2d2" stroke-width="0.1">grafana-prod-web</text></g><g transform="translate(99.39999999999998,590.3) rotate(-45)"><g transform="translate(-66.80,-6.00)" fill="none" stroke="#d2d2d2" stroke-linecap="round" stroke-linejoin="round"><path transform="translate(0.00,0) scale(0.21)" d="M8,-80H28L20,-56Q32,-44 24,-32L18,-30M8,-80V10M38,-70H94M62,-86L44,-42H92M68,-58V8L60,4M52,-24L42,-4M80,-24L92,-4" stroke-width="6.43"/><path transform="translate(21.00,0) scale(0.21)" d="M32,-86L4,-54M32,-86L62,-56M14,-50H52V-26H22V6H56V-6M72,-76V-22M90,-86V8L80,2" stroke-width="6.43"/><path transform="translate(42.00,0) scale(0.21)" d="M6,-66H94M50,-86V-30M50,-64L8,-32M50,-64L92,-34M16,-16L8,6M38,-16L40,6M60,-16L64,6M82,-16L94,6" stroke-width="6.43"/><path transform="translate(63.00,0) scale(0.21)" d="M40,-84Q12,-38 40,8" stroke-width="6.43"/><text x="72.56" y="0" font-size="21" fill="#d2d2d2" stroke="#d2d2d2" stroke-width="0.35">1628</text><path transform="translate(119.26,0) scale(0.21)" d="M8,-84Q36,-38 8,8" stroke-width="6.43"/></g><text x="-96.83" y="16.50" font-size="22" letter-spacing="1.25" fill="#d2d2d2" stroke="#d2d2d2" stroke-width="0.1">grafana-prod-web</text></g><g transform="translate(399.4,-9.699999999999989) rotate(-45)"><g transform="translate(-66.80,-6.00)" fill="none" stroke="#d2d2d2" stroke-linecap="round" stroke-linejoin="round"><path transform="translate(0.00,0) scale(0.21)" d="M8,-80H28L20,-56Q32,-44 24,-32L18,-30M8,-80V10M38,-70H94M62,-86L44,-42H92M68,-58V8L60,4M52,-24L42,-4M80,-24L92,-4" stroke-width="6.43"/><path transform="translate(21.00,0) scale(0.21)" d="M32,-86L4,-54M32,-86L62,-56M14,-50H52V-26H22V6H56V-6M72,-76V-22M90,-86V8L80,2" stroke-width="6.43"/><path transform="translate(42.00,0) scale(0.21)" d="M6,-66H94M50,-86V-30M50,-64L8,-32M50,-64L92,-34M16,-16L8,6M38,-16L40,6M60,-16L64,6M82,-16L94,6" stroke-width="6.43"/><path transform="translate(63.00,0) scale(0.21)" d="M40,-84Q12,-38 40,8" stroke-width="6.43"/><text x="72.56" y="0" font-size="21" fill="#d2d2d2" stroke="#d2d2d2" stroke-width="0.35">1628</text><path transform="translate(119.26,0) scale(0.21)" d="M8,-84Q36,-38 8,8" stroke-width="6.43"/></g><text x="-96.83" y="16.50" font-size="22" letter-spacing="1.25" fill="#d2d2d2" stroke="#d2d2d2" stroke-width="0.1">grafana-prod-web</text></g><g transform="translate(399.4,290.3) rotate(-45)"><g transform="translate(-66.80,-6.00)" fill="none" stroke="#d2d2d2" stroke-linecap="round" stroke-linejoin="round"><path transform="translate(0.00,0) scale(0.21)" d="M8,-80H28L20,-56Q32,-44 24,-32L18,-30M8,-80V10M38,-70H94M62,-86L44,-42H92M68,-58V8L60,4M52,-24L42,-4M80,-24L92,-4" stroke-width="6.43"/><path transform="translate(21.00,0) scale(0.21)" d="M32,-86L4,-54M32,-86L62,-56M14,-50H52V-26H22V6H56V-6M72,-76V-22M90,-86V8L80,2" stroke-width="6.43"/><path transform="translate(42.00,0) scale(0.21)" d="M6,-66H94M50,-86V-30M50,-64L8,-32M50,-64L92,-34M16,-16L8,6M38,-16L40,6M60,-16L64,6M82,-16L94,6" stroke-width="6.43"/><path transform="translate(63.00,0) scale(0.21)" d="M40,-84Q12,-38 40,8" stroke-width="6.43"/><text x="72.56" y="0" font-size="21" fill="#d2d2d2" stroke="#d2d2d2" stroke-width="0.35">1628</text><path transform="translate(119.26,0) scale(0.21)" d="M8,-84Q36,-38 8,8" stroke-width="6.43"/></g><text x="-96.83" y="16.50" font-size="22" letter-spacing="1.25" fill="#d2d2d2" stroke="#d2d2d2" stroke-width="0.1">grafana-prod-web</text></g><g transform="translate(399.4,590.3) rotate(-45)"><g transform="translate(-66.80,-6.00)" fill="none" stroke="#d2d2d2" stroke-linecap="round" stroke-linejoin="round"><path transform="translate(0.00,0) scale(0.21)" d="M8,-80H28L20,-56Q32,-44 24,-32L18,-30M8,-80V10M38,-70H94M62,-86L44,-42H92M68,-58V8L60,4M52,-24L42,-4M80,-24L92,-4" stroke-width="6.43"/><path transform="translate(21.00,0) scale(0.21)" d="M32,-86L4,-54M32,-86L62,-56M14,-50H52V-26H22V6H56V-6M72,-76V-22M90,-86V8L80,2" stroke-width="6.43"/><path transform="translate(42.00,0) scale(0.21)" d="M6,-66H94M50,-86V-30M50,-64L8,-32M50,-64L92,-34M16,-16L8,6M38,-16L40,6M60,-16L64,6M82,-16L94,6" stroke-width="6.43"/><path transform="translate(63.00,0) scale(0.21)" d="M40,-84Q12,-38 40,8" stroke-width="6.43"/><text x="72.56" y="0" font-size="21" fill="#d2d2d2" stroke="#d2d2d2" stroke-width="0.35">1628</text><path transform="translate(119.26,0) scale(0.21)" d="M8,-84Q36,-38 8,8" stroke-width="6.43"/></g><text x="-96.83" y="16.50" font-size="22" letter-spacing="1.25" fill="#d2d2d2" stroke="#d2d2d2" stroke-width="0.1">grafana-prod-web</text></g><g transform="translate(699.4,-9.699999999999989) rotate(-45)"><g transform="translate(-66.80,-6.00)" fill="none" stroke="#d2d2d2" stroke-linecap="round" stroke-linejoin="round"><path transform="translate(0.00,0) scale(0.21)" d="M8,-80H28L20,-56Q32,-44 24,-32L18,-30M8,-80V10M38,-70H94M62,-86L44,-42H92M68,-58V8L60,4M52,-24L42,-4M80,-24L92,-4" stroke-width="6.43"/><path transform="translate(21.00,0) scale(0.21)" d="M32,-86L4,-54M32,-86L62,-56M14,-50H52V-26H22V6H56V-6M72,-76V-22M90,-86V8L80,2" stroke-width="6.43"/><path transform="translate(42.00,0) scale(0.21)" d="M6,-66H94M50,-86V-30M50,-64L8,-32M50,-64L92,-34M16,-16L8,6M38,-16L40,6M60,-16L64,6M82,-16L94,6" stroke-width="6.43"/><path transform="translate(63.00,0) scale(0.21)" d="M40,-84Q12,-38 40,8" stroke-width="6.43"/><text x="72.56" y="0" font-size="21" fill="#d2d2d2" stroke="#d2d2d2" stroke-width="0.35">1628</text><path transform="translate(119.26,0) scale(0.21)" d="M8,-84Q36,-38 8,8" stroke-width="6.43"/></g><text x="-96.83" y="16.50" font-size="22" letter-spacing="1.25" fill="#d2d2d2" stroke="#d2d2d2" stroke-width="0.1">grafana-prod-web</text></g><g transform="translate(699.4,290.3) rotate(-45)"><g transform="translate(-66.80,-6.00)" fill="none" stroke="#d2d2d2" stroke-linecap="round" stroke-linejoin="round"><path transform="translate(0.00,0) scale(0.21)" d="M8,-80H28L20,-56Q32,-44 24,-32L18,-30M8,-80V10M38,-70H94M62,-86L44,-42H92M68,-58V8L60,4M52,-24L42,-4M80,-24L92,-4" stroke-width="6.43"/><path transform="translate(21.00,0) scale(0.21)" d="M32,-86L4,-54M32,-86L62,-56M14,-50H52V-26H22V6H56V-6M72,-76V-22M90,-86V8L80,2" stroke-width="6.43"/><path transform="translate(42.00,0) scale(0.21)" d="M6,-66H94M50,-86V-30M50,-64L8,-32M50,-64L92,-34M16,-16L8,6M38,-16L40,6M60,-16L64,6M82,-16L94,6" stroke-width="6.43"/><path transform="translate(63.00,0) scale(0.21)" d="M40,-84Q12,-38 40,8" stroke-width="6.43"/><text x="72.56" y="0" font-size="21" fill="#d2d2d2" stroke="#d2d2d2" stroke-width="0.35">1628</text><path transform="translate(119.26,0) scale(0.21)" d="M8,-84Q36,-38 8,8" stroke-width="6.43"/></g><text x="-96.83" y="16.50" font-size="22" letter-spacing="1.25" fill="#d2d2d2" stroke="#d2d2d2" stroke-width="0.1">grafana-prod-web</text></g><g transform="translate(699.4,590.3) rotate(-45)"><g transform="translate(-66.80,-6.00)" fill="none" stroke="#d2d2d2" stroke-linecap="round" stroke-linejoin="round"><path transform="translate(0.00,0) scale(0.21)" d="M8,-80H28L20,-56Q32,-44 24,-32L18,-30M8,-80V10M38,-70H94M62,-86L44,-42H92M68,-58V8L60,4M52,-24L42,-4M80,-24L92,-4" stroke-width="6.43"/><path transform="translate(21.00,0) scale(0.21)" d="M32,-86L4,-54M32,-86L62,-56M14,-50H52V-26H22V6H56V-6M72,-76V-22M90,-86V8L80,2" stroke-width="6.43"/><path transform="translate(42.00,0) scale(0.21)" d="M6,-66H94M50,-86V-30M50,-64L8,-32M50,-64L92,-34M16,-16L8,6M38,-16L40,6M60,-16L64,6M82,-16L94,6" stroke-width="6.43"/><path transform="translate(63.00,0) scale(0.21)" d="M40,-84Q12,-38 40,8" stroke-width="6.43"/><text x="72.56" y="0" font-size="21" fill="#d2d2d2" stroke="#d2d2d2" stroke-width="0.35">1628</text><path transform="translate(119.26,0) scale(0.21)" d="M8,-84Q36,-38 8,8" stroke-width="6.43"/></g><text x="-96.83" y="16.50" font-size="22" letter-spacing="1.25" fill="#d2d2d2" stroke="#d2d2d2" stroke-width="0.1">grafana-prod-web</text></g><g transform="translate(999.4,-9.699999999999989) rotate(-45)"><g transform="translate(-66.80,-6.00)" fill="none" stroke="#d2d2d2" stroke-linecap="round" stroke-linejoin="round"><path transform="translate(0.00,0) scale(0.21)" d="M8,-80H28L20,-56Q32,-44 24,-32L18,-30M8,-80V10M38,-70H94M62,-86L44,-42H92M68,-58V8L60,4M52,-24L42,-4M80,-24L92,-4" stroke-width="6.43"/><path transform="translate(21.00,0) scale(0.21)" d="M32,-86L4,-54M32,-86L62,-56M14,-50H52V-26H22V6H56V-6M72,-76V-22M90,-86V8L80,2" stroke-width="6.43"/><path transform="translate(42.00,0) scale(0.21)" d="M6,-66H94M50,-86V-30M50,-64L8,-32M50,-64L92,-34M16,-16L8,6M38,-16L40,6M60,-16L64,6M82,-16L94,6" stroke-width="6.43"/><path transform="translate(63.00,0) scale(0.21)" d="M40,-84Q12,-38 40,8" stroke-width="6.43"/><text x="72.56" y="0" font-size="21" fill="#d2d2d2" stroke="#d2d2d2" stroke-width="0.35">1628</text><path transform="translate(119.26,0) scale(0.21)" d="M8,-84Q36,-38 8,8" stroke-width="6.43"/></g><text x="-96.83" y="16.50" font-size="22" letter-spacing="1.25" fill="#d2d2d2" stroke="#d2d2d2" stroke-width="0.1">grafana-prod-web</text></g><g transform="translate(999.4,290.3) rotate(-45)"><g transform="translate(-66.80,-6.00)" fill="none" stroke="#d2d2d2" stroke-linecap="round" stroke-linejoin="round"><path transform="translate(0.00,0) scale(0.21)" d="M8,-80H28L20,-56Q32,-44 24,-32L18,-30M8,-80V10M38,-70H94M62,-86L44,-42H92M68,-58V8L60,4M52,-24L42,-4M80,-24L92,-4" stroke-width="6.43"/><path transform="translate(21.00,0) scale(0.21)" d="M32,-86L4,-54M32,-86L62,-56M14,-50H52V-26H22V6H56V-6M72,-76V-22M90,-86V8L80,2" stroke-width="6.43"/><path transform="translate(42.00,0) scale(0.21)" d="M6,-66H94M50,-86V-30M50,-64L8,-32M50,-64L92,-34M16,-16L8,6M38,-16L40,6M60,-16L64,6M82,-16L94,6" stroke-width="6.43"/><path transform="translate(63.00,0) scale(0.21)" d="M40,-84Q12,-38 40,8" stroke-width="6.43"/><text x="72.56" y="0" font-size="21" fill="#d2d2d2" stroke="#d2d2d2" stroke-width="0.35">1628</text><path transform="translate(119.26,0) scale(0.21)" d="M8,-84Q36,-38 8,8" stroke-width="6.43"/></g><text x="-96.83" y="16.50" font-size="22" letter-spacing="1.25" fill="#d2d2d2" stroke="#d2d2d2" stroke-width="0.1">grafana-prod-web</text></g><g transform="translate(999.4,590.3) rotate(-45)"><g transform="translate(-66.80,-6.00)" fill="none" stroke="#d2d2d2" stroke-linecap="round" stroke-linejoin="round"><path transform="translate(0.00,0) scale(0.21)" d="M8,-80H28L20,-56Q32,-44 24,-32L18,-30M8,-80V10M38,-70H94M62,-86L44,-42H92M68,-58V8L60,4M52,-24L42,-4M80,-24L92,-4" stroke-width="6.43"/><path transform="translate(21.00,0) scale(0.21)" d="M32,-86L4,-54M32,-86L62,-56M14,-50H52V-26H22V6H56V-6M72,-76V-22M90,-86V8L80,2" stroke-width="6.43"/><path transform="translate(42.00,0) scale(0.21)" d="M6,-66H94M50,-86V-30M50,-64L8,-32M50,-64L92,-34M16,-16L8,6M38,-16L40,6M60,-16L64,6M82,-16L94,6" stroke-width="6.43"/><path transform="translate(63.00,0) scale(0.21)" d="M40,-84Q12,-38 40,8" stroke-width="6.43"/><text x="72.56" y="0" font-size="21" fill="#d2d2d2" stroke="#d2d2d2" stroke-width="0.35">1628</text><path transform="translate(119.26,0) scale(0.21)" d="M8,-84Q36,-38 8,8" stroke-width="6.43"/></g><text x="-96.83" y="16.50" font-size="22" letter-spacing="1.25" fill="#d2d2d2" stroke="#d2d2d2" stroke-width="0.1">grafana-prod-web</text></g><g transform="translate(1299.4,-9.699999999999989) rotate(-45)"><g transform="translate(-66.80,-6.00)" fill="none" stroke="#d2d2d2" stroke-linecap="round" stroke-linejoin="round"><path transform="translate(0.00,0) scale(0.21)" d="M8,-80H28L20,-56Q32,-44 24,-32L18,-30M8,-80V10M38,-70H94M62,-86L44,-42H92M68,-58V8L60,4M52,-24L42,-4M80,-24L92,-4" stroke-width="6.43"/><path transform="translate(21.00,0) scale(0.21)" d="M32,-86L4,-54M32,-86L62,-56M14,-50H52V-26H22V6H56V-6M72,-76V-22M90,-86V8L80,2" stroke-width="6.43"/><path transform="translate(42.00,0) scale(0.21)" d="M6,-66H94M50,-86V-30M50,-64L8,-32M50,-64L92,-34M16,-16L8,6M38,-16L40,6M60,-16L64,6M82,-16L94,6" stroke-width="6.43"/><path transform="translate(63.00,0) scale(0.21)" d="M40,-84Q12,-38 40,8" stroke-width="6.43"/><text x="72.56" y="0" font-size="21" fill="#d2d2d2" stroke="#d2d2d2" stroke-width="0.35">1628</text><path transform="translate(119.26,0) scale(0.21)" d="M8,-84Q36,-38 8,8" stroke-width="6.43"/></g><text x="-96.83" y="16.50" font-size="22" letter-spacing="1.25" fill="#d2d2d2" stroke="#d2d2d2" stroke-width="0.1">grafana-prod-web</text></g><g transform="translate(1299.4,290.3) rotate(-45)"><g transform="translate(-66.80,-6.00)" fill="none" stroke="#d2d2d2" stroke-linecap="round" stroke-linejoin="round"><path transform="translate(0.00,0) scale(0.21)" d="M8,-80H28L20,-56Q32,-44 24,-32L18,-30M8,-80V10M38,-70H94M62,-86L44,-42H92M68,-58V8L60,4M52,-24L42,-4M80,-24L92,-4" stroke-width="6.43"/><path transform="translate(21.00,0) scale(0.21)" d="M32,-86L4,-54M32,-86L62,-56M14,-50H52V-26H22V6H56V-6M72,-76V-22M90,-86V8L80,2" stroke-width="6.43"/><path transform="translate(42.00,0) scale(0.21)" d="M6,-66H94M50,-86V-30M50,-64L8,-32M50,-64L92,-34M16,-16L8,6M38,-16L40,6M60,-16L64,6M82,-16L94,6" stroke-width="6.43"/><path transform="translate(63.00,0) scale(0.21)" d="M40,-84Q12,-38 40,8" stroke-width="6.43"/><text x="72.56" y="0" font-size="21" fill="#d2d2d2" stroke="#d2d2d2" stroke-width="0.35">1628</text><path transform="translate(119.26,0) scale(0.21)" d="M8,-84Q36,-38 8,8" stroke-width="6.43"/></g><text x="-96.83" y="16.50" font-size="22" letter-spacing="1.25" fill="#d2d2d2" stroke="#d2d2d2" stroke-width="0.1">grafana-prod-web</text></g><g transform="translate(1299.4,590.3) rotate(-45)"><g transform="translate(-66.80,-6.00)" fill="none" stroke="#d2d2d2" stroke-linecap="round" stroke-linejoin="round"><path transform="translate(0.00,0) scale(0.21)" d="M8,-80H28L20,-56Q32,-44 24,-32L18,-30M8,-80V10M38,-70H94M62,-86L44,-42H92M68,-58V8L60,4M52,-24L42,-4M80,-24L92,-4" stroke-width="6.43"/><path transform="translate(21.00,0) scale(0.21)" d="M32,-86L4,-54M32,-86L62,-56M14,-50H52V-26H22V6H56V-6M72,-76V-22M90,-86V8L80,2" stroke-width="6.43"/><path transform="translate(42.00,0) scale(0.21)" d="M6,-66H94M50,-86V-30M50,-64L8,-32M50,-64L92,-34M16,-16L8,6M38,-16L40,6M60,-16L64,6M82,-16L94,6" stroke-width="6.43"/><path transform="translate(63.00,0) scale(0.21)" d="M40,-84Q12,-38 40,8" stroke-width="6.43"/><text x="72.56" y="0" font-size="21" fill="#d2d2d2" stroke="#d2d2d2" stroke-width="0.35">1628</text><path transform="translate(119.26,0) scale(0.21)" d="M8,-84Q36,-38 8,8" stroke-width="6.43"/></g><text x="-96.83" y="16.50" font-size="22" letter-spacing="1.25" fill="#d2d2d2" stroke="#d2d2d2" stroke-width="0.1">grafana-prod-web</text></g></g></svg></body></html>
